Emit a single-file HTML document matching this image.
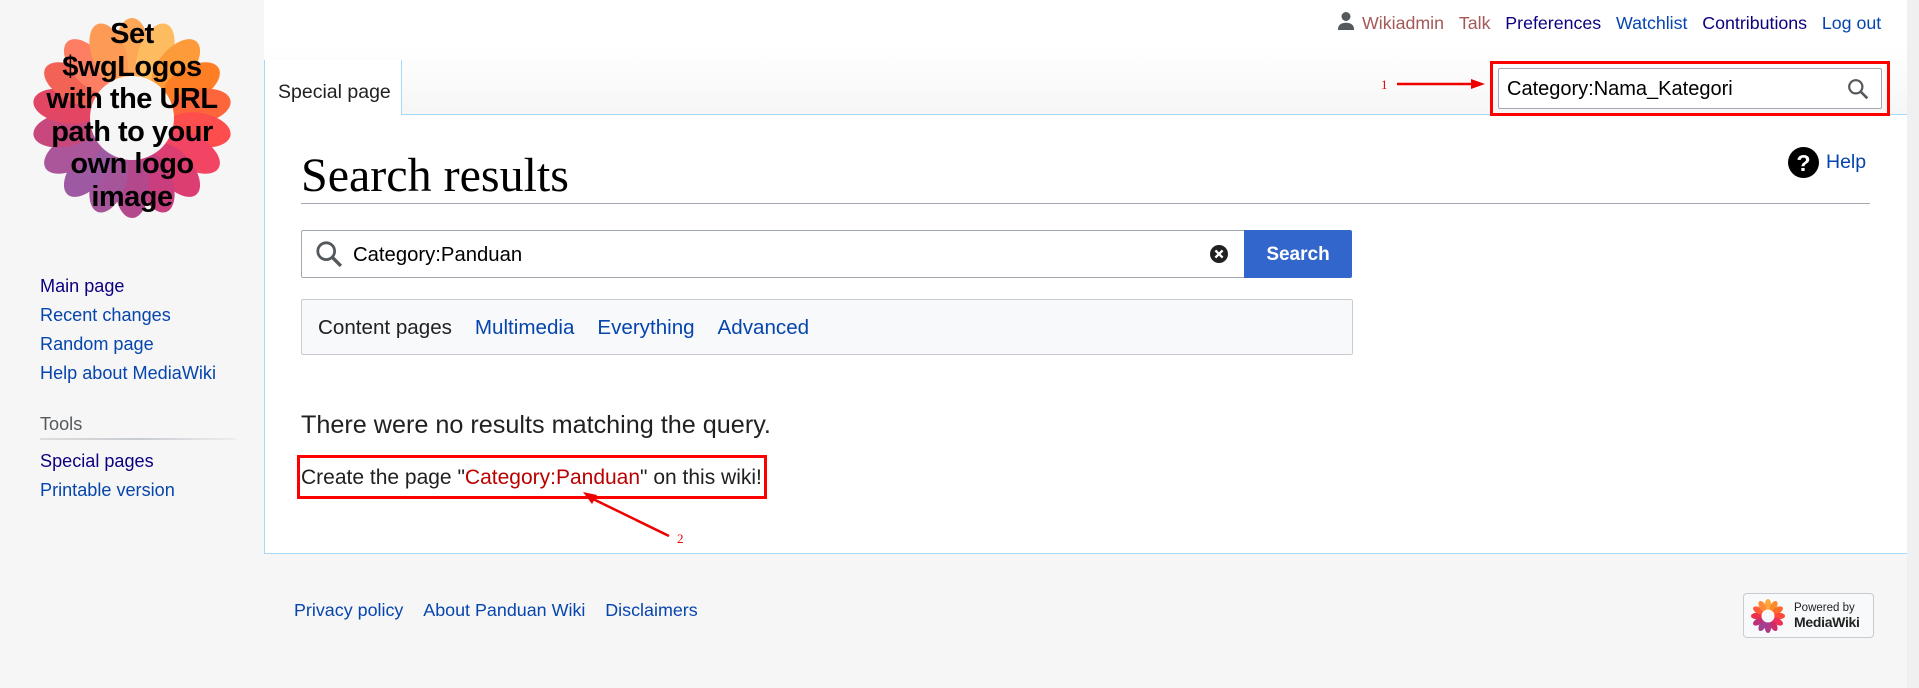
<!DOCTYPE html>
<html><head><meta charset="utf-8"><style>
*{box-sizing:border-box;margin:0;padding:0}
body{width:1919px;height:688px;background:#f6f6f6;font-family:"Liberation Sans",Arial,sans-serif;position:relative;overflow:hidden;color:#202122}
a{text-decoration:none;color:#0645ad}
.abs{position:absolute;white-space:nowrap}
.hdrgrad{position:absolute;left:264px;top:0;width:1643px;height:114px;background:linear-gradient(#fff 40%,#f6f6f6)}
.content{position:absolute;left:264px;top:114px;width:1643px;height:440px;background:#fff;border-left:1px solid #a7d7f9;border-top:1px solid #a7d7f9;border-bottom:1px solid #a7d7f9}
.tab{position:absolute;left:264px;top:60px;width:138px;height:55px;background:#fff;border-left:1px solid #a7d7f9;border-right:1px solid #a7d7f9;font-size:19.5px;padding:21px 0 0 13px}
.scroll{position:absolute;left:1907px;top:0;width:12px;height:688px;background:#f0f0f0}
.side a{position:absolute;left:40px;font-size:18.1px;white-space:nowrap}
</style></head><body>
<div class="hdrgrad"></div>
<div class="scroll"></div>
<div class="content"></div>
<div class="tab">Special page</div>

<svg class="abs" style="left:30px;top:16px" width="204" height="204" viewBox="-102 -102 204 204">
<g opacity="0.85">
<ellipse cx="0" cy="-68" rx="17" ry="32" fill="#ff9a3c"/>
<ellipse cx="0" cy="-68" rx="17" ry="32" fill="#ffb347" transform="rotate(20)"/>
<ellipse cx="0" cy="-68" rx="17" ry="32" fill="#ff8c1a" transform="rotate(40)"/>
<ellipse cx="0" cy="-68" rx="17" ry="32" fill="#ff6a00" transform="rotate(60)"/>
<ellipse cx="0" cy="-68" rx="17" ry="32" fill="#ff4d1a" transform="rotate(80)"/>
<ellipse cx="0" cy="-68" rx="17" ry="32" fill="#ff3030" transform="rotate(100)"/>
<ellipse cx="0" cy="-68" rx="17" ry="32" fill="#f2264a" transform="rotate(120)"/>
<ellipse cx="0" cy="-68" rx="17" ry="32" fill="#d91e5a" transform="rotate(140)"/>
<ellipse cx="0" cy="-68" rx="17" ry="32" fill="#c21f6a" transform="rotate(160)"/>
<ellipse cx="0" cy="-68" rx="17" ry="32" fill="#a82a7a" transform="rotate(180)"/>
<ellipse cx="0" cy="-68" rx="17" ry="32" fill="#9a3a8a" transform="rotate(200)"/>
<ellipse cx="0" cy="-68" rx="17" ry="32" fill="#8e3f95" transform="rotate(220)"/>
<ellipse cx="0" cy="-68" rx="17" ry="32" fill="#9e3a8c" transform="rotate(240)"/>
<ellipse cx="0" cy="-68" rx="17" ry="32" fill="#c02a6a" transform="rotate(260)"/>
<ellipse cx="0" cy="-68" rx="17" ry="32" fill="#e0284a" transform="rotate(280)"/>
<ellipse cx="0" cy="-68" rx="17" ry="32" fill="#f24a3a" transform="rotate(300)"/>
<ellipse cx="0" cy="-68" rx="17" ry="32" fill="#ff6a4a" transform="rotate(320)"/>
<ellipse cx="0" cy="-68" rx="17" ry="32" fill="#ff8a3a" transform="rotate(340)"/>
</g>
<circle r="42" fill="#f6f6f6"/>
</svg>
<div class="abs" style="left:20px;top:18px;width:224px;text-align:center;font-weight:bold;font-size:29px;line-height:32.5px;color:#000;letter-spacing:-0.5px">Set<br>$wgLogos<br>with the URL<br>path to your<br>own logo<br>image</div>

<div class="side">
<a style="top:276px;color:#0b0080">Main page</a>
<a style="top:305px">Recent changes</a>
<a style="top:334px">Random page</a>
<a style="top:363px">Help about MediaWiki</a>
<a style="top:414px;color:#54595d">Tools</a>
<a style="top:451px;color:#0b0080">Special pages</a>
<a style="top:480px">Printable version</a>
</div>
<div class="abs" style="left:40px;top:438px;width:196px;height:2px;background:linear-gradient(90deg,#ddd,#c8ccd1 50%,#eee)"></div>

<svg class="abs" style="left:1337px;top:12px" width="18" height="18" viewBox="0 0 20 20"><circle cx="10" cy="5" r="5" fill="#54595d"/><path d="M1 20c0-6 4-8 9-8s9 2 9 8z" fill="#54595d"/></svg>
<div class="abs" style="left:1362px;top:13px;font-size:17.8px">
<a style="color:#a55858">Wikiadmin</a>&nbsp;&nbsp;&nbsp;<a style="color:#a55858">Talk</a>&nbsp;&nbsp;&nbsp;<a style="color:#0b0080">Preferences</a>&nbsp;&nbsp;&nbsp;<a>Watchlist</a>&nbsp;&nbsp;&nbsp;<a style="color:#0b0080">Contributions</a>&nbsp;&nbsp;&nbsp;<a>Log out</a></div>

<div class="abs" style="left:1490px;top:61px;width:400px;height:55px;border:3px solid #f00"></div>
<div class="abs" style="left:1498px;top:68px;width:384px;height:41px;background:#fff;border:1px solid #a2a9b1;border-radius:2px;font-size:20px;padding:9px 0 0 8px;color:#000">Category:Nama_Kategori</div>
<svg class="abs" style="left:1847px;top:78px" width="22" height="22" viewBox="0 0 20 20"><circle cx="8" cy="8" r="6" fill="none" stroke="#54595d" stroke-width="2"/><path d="M12.5 12.5l6 6" stroke="#54595d" stroke-width="2.4"/></svg>
<div class="abs" style="left:1381px;top:77px;font-family:'Liberation Serif',serif;font-size:13px;color:#e00">1</div>
<svg class="abs" style="left:1395px;top:76px" width="95" height="16"><path d="M2 8H80" stroke="#e00" stroke-width="2.5"/><path d="M76 3L90 8L76 13z" fill="#e00"/></svg>

<div class="abs" style="left:301px;top:148px;font-family:'Liberation Serif',Georgia,serif;font-size:48px;color:#000">Search results</div>
<div class="abs" style="left:301px;top:203px;width:1569px;height:1px;background:#a2a9b1"></div>
<svg class="abs" style="left:1788px;top:147px" width="31" height="31" viewBox="0 0 20 20"><circle cx="10" cy="10" r="10" fill="#000"/><text x="10" y="15.5" text-anchor="middle" font-family="Liberation Sans" font-weight="bold" font-size="15" fill="#fff">?</text></svg>
<div class="abs" style="left:1826px;top:151px;font-size:19.5px;color:#0645ad">Help</div>

<div class="abs" style="left:301px;top:230px;width:944px;height:48px;border:1px solid #a2a9b1;border-radius:2px 0 0 2px;background:#fff;font-size:20.3px;padding:13px 0 0 51px;color:#000">Category:Panduan</div>
<svg class="abs" style="left:315px;top:240px" width="28" height="28" viewBox="0 0 20 20"><circle cx="8" cy="8" r="6" fill="none" stroke="#54595d" stroke-width="2"/><path d="M12.5 12.5l6 6" stroke="#54595d" stroke-width="2.4"/></svg>
<svg class="abs" style="left:1210px;top:245px" width="18" height="18" viewBox="0 0 20 20"><circle cx="10" cy="10" r="10" fill="#202122"/><path d="M6 6l8 8M14 6l-8 8" stroke="#fff" stroke-width="2.6"/></svg>
<div class="abs" style="left:1244px;top:230px;width:108px;height:48px;background:#36c;border-radius:0 2px 2px 0;color:#fff;font-weight:bold;font-size:19px;text-align:center;padding-top:14px">Search</div>

<div class="abs" style="left:301px;top:299px;width:1052px;height:56px;background:#f8f9fa;border:1px solid #c8ccd1;border-radius:2px;font-size:20.6px;padding:16px 0 0 16px;color:#202122">Content pages&nbsp;&nbsp;&nbsp;&nbsp;<a>Multimedia</a>&nbsp;&nbsp;&nbsp;&nbsp;<a>Everything</a>&nbsp;&nbsp;&nbsp;&nbsp;<a>Advanced</a></div>

<div class="abs" style="left:301px;top:411px;font-size:25.2px;color:#202122">There were no results matching the query.</div>
<div class="abs" style="left:297px;top:455px;width:470px;height:44px;border:3px solid #f00"></div>
<div class="abs" style="left:301px;top:466px;font-size:21px;color:#202122">Create the page "<a style="color:#ba0000">Category:Panduan</a>" on this wiki!</div>
<svg class="abs" style="left:575px;top:485px" width="100" height="60"><path d="M94 51L14 12" stroke="#e00" stroke-width="2.5"/><path d="M8 7L22 10L17 19z" fill="#e00"/></svg>
<div class="abs" style="left:677px;top:531px;font-family:'Liberation Serif',serif;font-size:13px;color:#e00">2</div>

<div class="abs" style="left:294px;top:600px;font-size:17.9px"><a>Privacy policy</a>&nbsp;&nbsp;&nbsp;&nbsp;<a>About Panduan Wiki</a>&nbsp;&nbsp;&nbsp;&nbsp;<a>Disclaimers</a></div>
<div class="abs" style="left:1743px;top:593px;width:131px;height:45px;background:#f8f9fa;border:1px solid #c8ccd1;border-radius:4px"></div>
<svg class="abs" style="left:1751px;top:599px" width="34" height="34" viewBox="-17 -17 34 34">
<ellipse cx="0" cy="-11" rx="3.2" ry="6" fill="#ffa83c"/>
<ellipse cx="0" cy="-11" rx="3.2" ry="6" fill="#ff8a2a" transform="rotate(30)"/>
<ellipse cx="0" cy="-11" rx="3.2" ry="6" fill="#ff6a2a" transform="rotate(60)"/>
<ellipse cx="0" cy="-11" rx="3.2" ry="6" fill="#ff4a3a" transform="rotate(90)"/>
<ellipse cx="0" cy="-11" rx="3.2" ry="6" fill="#f0305a" transform="rotate(120)"/>
<ellipse cx="0" cy="-11" rx="3.2" ry="6" fill="#d02a6a" transform="rotate(150)"/>
<ellipse cx="0" cy="-11" rx="3.2" ry="6" fill="#b03a8a" transform="rotate(180)"/>
<ellipse cx="0" cy="-11" rx="3.2" ry="6" fill="#a04090" transform="rotate(210)"/>
<ellipse cx="0" cy="-11" rx="3.2" ry="6" fill="#c0307a" transform="rotate(240)"/>
<ellipse cx="0" cy="-11" rx="3.2" ry="6" fill="#e8304a" transform="rotate(270)"/>
<ellipse cx="0" cy="-11" rx="3.2" ry="6" fill="#ff5a3a" transform="rotate(300)"/>
<ellipse cx="0" cy="-11" rx="3.2" ry="6" fill="#ff8a3a" transform="rotate(330)"/>
<circle r="6.5" fill="#f8f9fa"/>
</svg>
<div class="abs" style="left:1794px;top:601px;font-size:11.5px;line-height:14px;color:#222">Powered by<br><span style="font-size:14px;font-weight:bold;letter-spacing:-0.3px">MediaWiki</span></div>
</body></html>
